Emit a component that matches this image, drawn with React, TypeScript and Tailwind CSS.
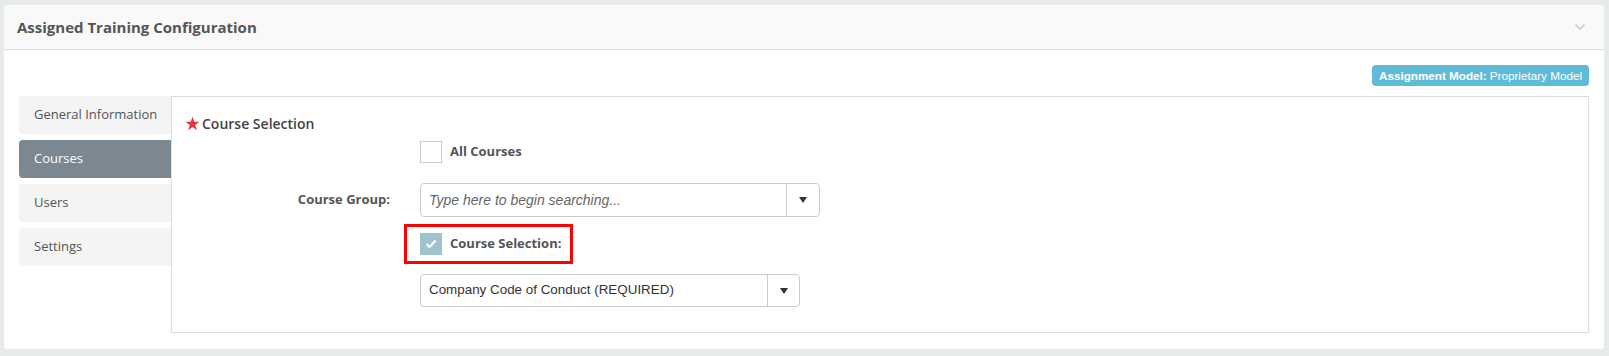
import React from "react";

const os = { fontFamily: '"Open Sans", "Liberation Sans", sans-serif' };
const ar = { fontFamily: '"Liberation Sans", Arial, sans-serif' };

function Caret() {
  return (
    <svg width="8" height="6" viewBox="0 0 8 6">
      <path d="M0 0 H8 L4 6 Z" fill="#333" />
    </svg>
  );
}

function Star() {
  const pts: string[] = [];
  for (let i = 0; i < 10; i++) {
    const r = i % 2 === 0 ? 8 : 3;
    const a = (Math.PI / 5) * i - Math.PI / 2;
    pts.push(`${(8 + r * Math.cos(a)).toFixed(2)},${(8.6 + r * Math.sin(a)).toFixed(2)}`);
  }
  return (
    <svg width="15" height="15" viewBox="0 0 16 16">
      <polygon points={pts.join(" ")} fill="#e8343f" strokeLinejoin="round" />
    </svg>
  );
}

export default function App() {
  const tabs = ["General Information", "Courses", "Users", "Settings"];
  return (
    <div className="w-[1609px] h-[356px] bg-[#e6ebe8] pt-[5px] pl-[4px] pr-[5px]" style={os}>
      <div className="bg-white rounded-[3px] h-[344px] flex flex-col">
        <div className="h-[45px] bg-[#f9f9f9] border-b border-[#dddddd] rounded-t-[3px] flex items-center justify-between pl-[13px] pr-[19px]">
          <div className="text-[15px] font-bold text-[#555555]">Assigned Training Configuration</div>
          <svg width="10" height="6" viewBox="0 0 10 6">
            <path d="M0.5 0.5 L5 5 L9.5 0.5" fill="none" stroke="#c3c3c3" strokeWidth="1.3" />
          </svg>
        </div>
        <div className="flex-1 px-[15px] pt-[15px] pb-[16px] flex flex-col">
          <div className="flex justify-end">
            <div className="h-[21px] bg-[#5fbcd9] rounded-[4px] px-[7px] flex items-center text-white text-[11.7px]" style={ar}>
              <span className="font-bold">Assignment Model:</span>
              <span className="ml-[3px]">Proprietary Model</span>
            </div>
          </div>
          <div className="flex flex-1 mt-[10px]">
            <div className="w-[152px] flex flex-col gap-[6px]">
              {tabs.map((t) => (
                <div
                  key={t}
                  className={
                    t === "Courses"
                      ? "h-[38px] rounded-l-[4px] bg-[#7b8791] text-white text-[13px] flex items-center pl-[15px]"
                      : "h-[38px] rounded-l-[4px] bg-[#f4f4f4] text-[#555555] text-[13px] flex items-center pl-[15px]"
                  }
                >
                  {t}
                </div>
              ))}
            </div>
            <div className="flex-1 border border-[#dddddd] pt-[16px] pl-[13px]">
              <div className="flex items-center h-[20px] text-[14px] font-semibold text-[#444444]">
                <span className="mr-[2px] flex"><Star /></span>
                <span>Course Selection</span>
              </div>
              <div className="flex flex-col ml-[-13px]">
                <div className="flex items-center mt-[8px]">
                  <div className="w-[248px]" />
                  <div className="w-[22px] h-[22px] border border-[#cccccc] bg-white" />
                  <span className="ml-[8px] text-[13px] font-bold text-[#555555]">All Courses</span>
                </div>
                <div className="flex items-center mt-[20px]">
                  <div className="w-[248px] pr-[30px] text-right text-[13px] font-bold text-[#555555]">Course Group:</div>
                  <div className="w-[400px] h-[34px] border border-[#cccccc] rounded-[4px] flex">
                    <div className="flex-1 flex items-center pl-[8px] text-[14px] italic text-[#666666]" style={ar}>
                      Type here to begin searching...
                    </div>
                    <div className="w-[33px] border-l border-[#cccccc] flex items-center justify-center">
                      <Caret />
                    </div>
                  </div>
                </div>
                <div className="flex mt-[7px]">
                  <div className="w-[232px]" />
                  <div className="h-[40px] border-[3px] border-[#ff0000] flex items-center pl-[13px] pr-[9px]">
                    <div className="w-[22px] h-[22px] bg-[#9fc4cd] flex items-center justify-center">
                      <svg width="12" height="10" viewBox="0 0 12 10">
                        <path d="M1.5 5 L4.5 8 L10.5 1.5" fill="none" stroke="#ffffff" strokeWidth="2.2" />
                      </svg>
                    </div>
                    <span className="ml-[8px] text-[13px] font-bold text-[#555555]">Course Selection:</span>
                  </div>
                </div>
                <div className="flex mt-[10px]">
                  <div className="w-[248px]" />
                  <div className="w-[380px] h-[33px] border border-[#cccccc] rounded-[4px] flex">
                    <div className="flex-1 flex items-center pl-[8px] text-[13.4px] text-[#333333]" style={ar}>
                      Company Code of Conduct (REQUIRED)
                    </div>
                    <div className="w-[32px] border-l border-[#cccccc] flex items-center justify-center">
                      <Caret />
                    </div>
                  </div>
                </div>
              </div>
            </div>
          </div>
        </div>
      </div>
    </div>
  );
}
